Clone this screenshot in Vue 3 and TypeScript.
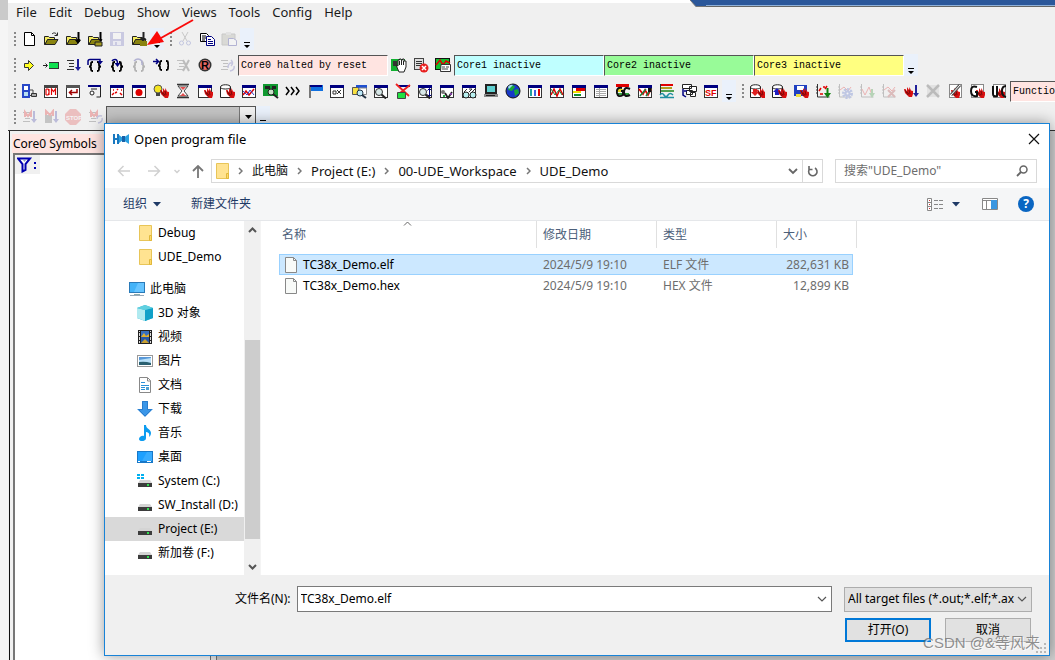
<script setup lang="ts">
import { ref } from 'vue'

type Shape = string

const R = (x: number, y: number, w: number, h: number, fill: string): Shape =>
  `<rect x="${x}" y="${y}" width="${w}" height="${h}" fill="${fill}" shape-rendering="crispEdges"/>`
const L = (d: string, stroke: string, width = 1): Shape =>
  `<path d="${d}" fill="none" stroke="${stroke}" stroke-width="${width}"/>`
const P = (d: string, fill: string, stroke = 'none'): Shape =>
  `<path d="${d}" fill="${fill}" stroke="${stroke}"/>`
const C = (x: number, y: number, r: number, fill: string, stroke = 'none'): Shape =>
  `<circle cx="${x}" cy="${y}" r="${r}" fill="${fill}" stroke="${stroke}"/>`
const T = (x: number, y: number, size: number, fill: string, text: string): Shape =>
  `<text x="${x}" y="${y}" font-size="${size}" font-weight="700" font-family="Liberation Sans, sans-serif" fill="${fill}">${text}</text>`

const NAVY = '#000080'
const RED = '#e00000'
const frame = (inner: Shape = '', bar = NAVY): Shape =>
  R(1, 2, 14, 13, '#333') + R(2, 4, 12, 10, '#fff') + R(1, 2, 14, 3, bar) + inner
const folder = P('M1.500 5.500h4l1 1h5v2H5l-3 5h-.5z', '#f4ec60', '#222') + P('M4.500 8.500h10.500l-3 5H2z', '#8a8410', '#222')
const hand = P('M7 7l1.500 0 1.500 2.500V5l2 3 .5-3 1.500 3.500 2 .5v3l-1 3h-3l-4-4z', '#d81010') + L('M10 9.500l2 3M12 8l1 4M8 8l3 5', '#7a0808')
const braces = L('M6 5H5.500Q4 5 4 6.500V8q0 1.500-2 1.500 2 0 2 1.500v1.500Q4 14 5.500 14H6M10 5h.5q1.500 0 1.500 1.500V8q0 1.500 2 1.500-2 0-2 1.500v1.500q0 1.500-1.500 1.500H10', '#000', 1.8)
const listArrow = R(2, 3, 7, 1, '#333') + R(4, 6, 5, 1, '#333') + R(4, 9, 5, 1, '#333') + R(2, 12, 7, 1, '#333')
const downArrow = R(12, 2, 2, 10, '#20209a') + P('M10 10h6l-3 4z', '#20209a')
const lens = C(6, 9, 3.5, '#d8e8e8', '#333') + L('M8.500 11.500L13 15.500', '#222', 2)
const can = P('M1.500 4c0-3 10-3 10 0v10.500h-10z', '#fff', '#222') + L('M1.500 4.500c1 2 9 2 10 0', '#222')
const axes = L('M2.500 1v13h12M1 4h2M1 7h2M1 10h2', '#333')
const page = R(2, 1, 13, 14, '#888') + R(3, 2, 11, 12, '#fff')

const icons: Record<string, Shape> = {
  'New': P('M3.500 1.500h7l3 3v10h-10z', '#fff', '#000') + L('M10.500 1.500v3h3', '#000'),
  'Open': folder + L('M9 3c2-2 4-1 5 1M14.500 1.500v3h-3', '#222'),
  'Load program': folder + L('M13.500 1v10', '#000', 2) + P('M10 9h6l-3 4z', '#000'),
  'Load more': folder + L('M13.500 1v9', '#000', 2) + P('M8 11h7v4H8z', '#a49a20', '#222'),
  'Save': R(1, 1, 14, 14, '#5a5ab8') + R(4, 2, 8, 6, '#fff') + R(4, 10, 8, 4, '#d8d8f4') + R(6, 11, 2, 3, '#5a5ab8'),
  'Load target file': folder + L('M12.500 1v8', '#222', 2) + P('M9 7h6l-3 4z', '#222') + R(9, 10, 7, 5, '#8a8410'),
  'Cut': L('M5 1l5 9M11 1L6 10', '#555') + C(4.5, 12, 2, 'none', '#3b4bb0') + C(11.5, 12, 2, 'none', '#3b4bb0'),
  'Copy': P('M1.500 2.500h6l2 2v6h-8z', '#fff', '#000') + L('M3 5h4M3 7h5M3 9h3', '#000') + P('M7.500 5.500h5l3 3v6h-8z', '#fff', NAVY) + L('M9 8.500h3M9 10.500h5M9 12.500h5', NAVY),
  'Paste': P('M1 3h13v11H1z', '#998', '#555') + R(5, 1, 5, 3, '#bbb') + P('M7.500 7.500h5l3 2v5h-8z', '#fff', NAVY),

  'Run to': P('M3.500 6.500h4v-3l5 5-5 5v-3h-4z', '#ffff20', '#333'),
  'Set location': R(6, 5, 10, 7, '#333') + R(6, 6, 9, 5, '#10e050') + L('M0 8.500h4M2.500 6.500l2 2-2 2', '#222'),
  'Step source': listArrow + downArrow,
  'Step over': braces + L('M1 8V4.500Q1 2.500 3 2.500h10v2', NAVY, 1.5) + P('M10.500 4h5.500l-2.700 3.500z', NAVY),
  'Step into': braces + L('M3 4Q4 2.500 6 2.500q2.500 0 2.500 4', NAVY, 1.5) + P('M5.500 6h6L8.500 10z', NAVY),
  'Step return': braces + L('M3 4q4-4 8 0v4', NAVY, 1.5),
  'Run until': `<g transform="translate(3 -1)">${braces}</g>` + L('M0 4.500h5M3 2l2.500 2.500L3 7', NAVY, 1.5),
  'Break': listArrow + L('M8 3l6 11M14 3L8 14', '#222', 2),
  'Reset': C(8, 8, 6.5, '#333') + C(8, 8, 5, '#e86868') + T(4, 12, 11, '#000', 'R'),
  'Restart': listArrow + L('M12 3q3 3 0 6M9 11q0-6 5-5M11 14q5-1 4-5', '#4a4ab0', 1.5),
  'Core halt': R(0, 2, 14, 12, '#10b030') + R(2, 4, 4, 5, '#333') + P('M5 8l2 1V3h1.500V2H10v1h1.500V2H13v2h2v6l-2 5H8z', '#fff', '#222') + L('M8.500 4v4M10.500 3v5M12.500 4v4', '#222'),
  'Core error': R(1, 1, 10, 12, '#444') + R(2, 2, 8, 10, '#ddd') + L('M3 4.500h6M3 6.500h6M3 8.500h6', '#333') + C(11, 11, 4.5, '#e82020') + L('M9 9l4 4M13 9l-4 4', '#fff', 1.5),
  'Core chart': R(0, 1, 15, 12, '#111') + R(1, 2, 13, 10, '#10c030') + L('M1 8l4-5 3 5 3-4 4 2', RED, 1.5) + P('M6 7.500h9.500v7H5.500z', '#fff', '#333') + L('M7 10h3M11 10h3M7 12h6', '#444'),

  'Target info': R(1, 1, 8, 14, '#2848c8') + R(3, 3, 4, 4, '#fff') + R(3, 9, 4, 4, '#b8e0f0') + L('M9 7h3v3M9 12.500h2', '#444') + P('M10.500 10.500h5v3h-5z', '#aaa', '#333'),
  'Memory dump': frame(L('M3 6v6M6 6v6M3 6h2l1 2v2l-1 2H3M8.500 12V6l2 2.500 2-2.500v6', RED, 1.2), '#444'),
  'Return view': frame(L('M12 6v3.500H4M7 7L4.500 9.500 7 12', '#a00000', 1.5), '#555'),
  'Call tree': R(1, 2, 13, 2, NAVY) + L('M4 6h6M13.500 4v10h-4', '#222') + C(5, 10, 2, '#fff', '#222'),
  'Scatter': frame(L('M3 12l2-2M6 10l2-1M8 7l1-1M11 10l2 2M4 7h1M12 7h1', RED, 1.5)),
  'Breakpoints': frame(C(8, 9.5, 3.5, RED)),
  'Trigger': C(5, 6, 4, '#f4e420', '#555') + R(3, 10, 4, 3, '#444') + hand,
  'Timing': L('M2 1.500h12M2 14.500h12', '#333', 1.5) + P('M3 3h10L9 8l4 5H3l4-5z', '#fff', '#444') + P('M5 4h6L8 7zM8 10l3 3H5z', '#e05050'),
  'Hand view': frame(hand),
  'Hand memory': can + hand,
  'Graph': frame(L('M2 12l3-4 3 4 5-6', RED, 1.5) + L('M2 8l4 4 3-5 4 5', '#3040d0')),
  'Inspect chip': R(0, 1, 15, 12, '#109830') + R(2, 3, 5, 3, '#222') + R(9, 3, 4, 3, '#222') + C(8, 9, 3, '#c8e0c8', '#222') + L('M10 11l5 4', '#222', 2),
  'Forward': L('M1 4l3 4-3 4M6 4l3 4-3 4M11 4l3 4-3 4', '#000', 1.5),
  'Flag': R(2, 2, 2, 13, '#777') + R(4, 2, 12, 6, '#1070e0') + R(3, 2, 12, 2, NAVY),
  'Hex': frame(L('M4 8h3v3H4zM8 7l4 4M12 7l-4 4', '#333')),
  'Find folder': R(5, 2, 11, 3, '#2050d0') + P('M1.500 4.500h5l1 1v6h-6z', '#f8e040', '#555') + P('M8 5h7.500v6.500H8z', '#fff', '#888') + C(9, 10, 3, '#bce8f8', '#234') + L('M11 12l4 3', '#234', 2),
  'Find': frame() + lens,
  'Disconnect': R(3, 2, 12, 2, NAVY) + L('M1 1l13 12M15 2L5 10', '#f02020', 1.8) + P('M2.500 9.500h8v6h-8z', '#20e040', '#444'),
  'Find symbol': frame(L('M12.500 5.500v8M10.500 7.500l2-2 2 2M10.500 11.500l2 2 2-2', NAVY)) + lens,
  'Variables': frame(C(4, 9, 2, '#777') + L('M6 10l3 5 4-6', '#222', 1.8) + R(4, 12, 2, 2, '#20b040') + R(11, 10, 2, 2, '#8040a0')),
  'Watch': frame(L('M3 9l3-3M8 6h3l-3 3M11 9l3-3', '#333')) + C(5, 12, 3, '#b8f0f0', '#222') + C(12, 12, 3, '#b8f0f0', '#222'),
  'Console': R(2, 1, 12, 10, '#222') + R(4, 3, 8, 6, '#60d0d0') + R(1, 11, 14, 3, '#888') + R(3, 12, 9, 1, '#222'),
  'Web': C(8, 8, 7, '#1838c8', '#111') + P('M4 3q5-2 6 1l-3 4-4-1zM9 7l4-1 1 4-4 3z', '#18a838') + P('M3 4q2-3 5-2l-4 4z', '#a0e0f0'),
  'Bars': frame(R(3, 6, 2, 7, '#20a0a0') + R(7, 7, 2, 6, '#4060e0') + R(11, 6, 2, 7, RED)),
  'Curve': frame(L('M2 12l3-6 3 7 3-7 3 6', RED, 1.5) + L('M2 6l4 6 4-5 3 5', '#208040')),
  'Gantt': frame(R(5, 5, 9, 3, RED) + R(2, 8, 8, 2, '#f0e000') + R(3, 11, 7, 2, '#109030')),
  'Table': frame(L('M3 6.500h10M3 8.500h10M3 10.500h10M3 12.500h10M6.500 5v9', '#aaa')),
  'Coverage': R(1, 1, 13, 3, RED) + R(3, 6, 5, 3, '#e8d820') + R(3, 10, 11, 2, '#30a040') + L('M7 5Q1 4 2 10q1 5 6 2V8H6M15 6q-6-3-6 3 0 6 6 3', '#111', 2),
  'Heat map': frame(L('M2 6l4 5 2-4 3 5 3-6', RED, 1.8) + L('M3 13l6-7M9 13l5-7', '#208040', 1.5) + R(11, 5, 3, 4, '#111')),
  'Profile': R(1, 1, 13, 2, RED) + R(2, 4, 11, 2, '#b0a020') + R(2, 7, 13, 2, '#50a050') + L('M1.500 1v10', '#333') + L('M1 12q2-3 4 0t4 0 5 0M1 14.500h14', '#2090a0', 1.5),
  'Blocks': P('M1.500 1.500h9v4h-9zM8.500 3.500h7v5h-7zM5.500 7.500h6v4h-6zM9.500 9.500h5v4h-5z', '#fff', '#222') + L('M2 6v6l3 2M3 8h3', NAVY, 1.5),
  'SF registers': frame(T(2, 13, 9, RED, 'SF')),

  'Load flash': can + P('M4 6h4v3h2l-4 4-4-4h2z', '#e02020') + `<g transform="translate(1 0)">${hand}</g>`,
  'Read flash': can + P('M4 12h4V9h2L6 5 2 9h2z', '#2020c0') + hand,
  'Save flash': R(1, 2, 13, 11, '#2040c0') + R(4, 3, 7, 4, '#fff') + R(3, 11, 5, 3, '#f0e040') + hand,
  'Plot load': axes + L('M4 8l2-3M8 4h2M5 11h3M10 6l2-3', RED, 1.5) + L('M12.500 5v7', '#108010', 2) + P('M9 10h7l-3.500 5z', '#108010'),
  'Plot settings': axes + L('M3 7l4-3 4 4 3-4', RED) + `<circle cx="10.500" cy="10.500" r="4" fill="none" stroke="#3050c0" stroke-width="3" stroke-dasharray="2 1"/>` + C(10.5, 10.5, 3, '#3050c0') + C(10.5, 10.5, 1, '#fff'),
  'Plot graph': axes + L('M3 6l3 6 4-8 3 8', RED) + L('M13 6v6', '#108010', 2) + P('M10 10h6l-3 5z', '#108010'),
  'Plot clear': axes + L('M3 7l4-3 4 4 3-4', RED) + L('M7 7l7 7M14 7l-7 7', '#a02020', 2),
  'Hand step': `<g transform="translate(-6 -1)">${hand}</g>` + downArrow,
  'Remove hand': R(2, 2, 12, 12, '#bbb') + L('M2 2l12 12M14 2L2 14', '#222', 2.5),
  'Edit hand': page + `<g transform="translate(-3 0)">${hand}</g>` + L('M4 12l9-10', '#555', 3) + L('M4 12l9-10', '#fff'),
  'Hand circle': page + hand + L('M8 4Q2 2 2 8t6 5V9H6', '#111', 2),
  'Hand pair': page + `<g transform="translate(-2 0)">${hand}</g>` + L('M2 3v8q0 3 4 2V3M15 3q-4 0-4 5t4 6', '#111', 2),

  'Multi step': listArrow + L('M4 8V3l3 4 3-4v5', RED, 2) + downArrow,
  'Multi lock': R(2, 6, 7, 8, '#444') + L('M3 6V2l4 4 3-4v5', RED, 2) + downArrow,
  'Stop all': P('M5 0h6l5 5v6l-5 5H5l-5-5V5z', '#e03030') + T(1, 11, 6, '#fff', 'STOP'),
  'Multi restart': listArrow + L('M4 8V3l3 4 3-4v5', RED, 2) + L('M10 10q0-4 5-3M11 14q5-1 4-5', '#4a4ab0', 1.5),
}

const off = new Set([
  'Save', 'Cut', 'Paste', 'Step return', 'Break', 'Restart', 'Plot settings', 'Plot graph', 'Plot clear',
  'Remove hand', 'Multi step', 'Multi lock', 'Stop all', 'Multi restart',
])

const fileTools = ['New', 'Open', 'Load program', 'Load more', 'Save', 'Load target file']
const editTools = ['Cut', 'Copy', 'Paste']
const runTools = ['Run to', 'Set location', 'Step source', 'Step over', 'Step into', 'Step return', 'Run until', 'Break', 'Reset', 'Restart']
const coreTools = ['Core halt', 'Core error', 'Core chart']
const viewTools = [
  'Target info', 'Memory dump', 'Return view', 'Call tree', 'Scatter', 'Breakpoints', 'Trigger', 'Timing', 'Hand view',
  'Hand memory', 'Graph', 'Inspect chip', 'Forward', 'Flag', 'Hex', 'Find folder', 'Find', 'Disconnect', 'Find symbol',
  'Variables', 'Watch', 'Console', 'Web', 'Bars', 'Curve', 'Gantt', 'Table', 'Coverage', 'Heat map', 'Profile', 'Blocks',
  'SF registers',
]
const traceTools = [
  'Load flash', 'Read flash', 'Save flash', 'Plot load', 'Plot settings', 'Plot graph', 'Plot clear', 'Hand step',
  'Remove hand', 'Edit hand', 'Hand circle', 'Hand pair',
]
const multiTools = ['Multi step', 'Multi lock', 'Stop all', 'Multi restart']

type Part =
  | { kind: 'tools'; items: string[] }
  | { kind: 'grip' }
  | { kind: 'more' }
  | { kind: 'field'; text: string; tone: string }
  | { kind: 'select' }

const bars: Part[][] = [
  [{ kind: 'grip' }, { kind: 'tools', items: fileTools }, { kind: 'more' }, { kind: 'grip' }, { kind: 'tools', items: editTools }, { kind: 'more' }],
  [
    { kind: 'grip' }, { kind: 'tools', items: runTools },
    { kind: 'field', text: 'Core0 halted by reset', tone: 'pink' },
    { kind: 'tools', items: coreTools },
    { kind: 'field', text: 'Core1 inactive', tone: 'cyan' },
    { kind: 'field', text: 'Core2 inactive', tone: 'green' },
    { kind: 'field', text: 'Core3 inactive', tone: 'yellow' },
    { kind: 'more' },
  ],
  [
    { kind: 'grip' }, { kind: 'tools', items: viewTools }, { kind: 'more' },
    { kind: 'grip' }, { kind: 'tools', items: traceTools },
    { kind: 'field', text: 'Function', tone: 'pink' },
  ],
  [{ kind: 'grip' }, { kind: 'tools', items: multiTools }, { kind: 'select' }, { kind: 'more' }],
]

const menus = ['File', 'Edit', 'Debug', 'Show', 'Views', 'Tools', 'Config', 'Help']

const drive = P('M3 7h10l2 3H1z', '#d4d4d4') + R(1, 10, 14, 4, '#3c3c3c') + R(10, 11, 2, 2, '#30e050')
const places: Record<string, Shape> = {
  folder: P('M2.500 .5h12v15h-12z', '#ffe391', '#e8c558') + P('M12.500 10.500h2v5h-2z', '#ffd968', '#e0b83c'),
  pc: R(0, 1, 16, 11, '#2a7ab8') + R(1, 2, 14, 9, '#43b3f8') + P('M9 2h6v9H5z', '#66c4ff') + R(5, 13, 6, 1, '#8aa') + R(1, 14, 14, 1, '#9ab'),
  cube: P('M0 3l8-3 8 3v10l-8 3-8-3z', '#28b4d0') + P('M0 3l8 2v11l-8-3z', '#b0eaf0') + P('M8 5l8-2v10l-8 3z', '#10a0c8') + P('M0 3l8-3 8 3-8 2z', '#60d0e0'),
  video: R(1, 1, 14, 14, '#222') + R(4, 2, 8, 6, '#3870c0') + R(4, 8, 8, 6, '#2858a8') + P('M4 8l3-4 2 3 3-2v3z', '#e0b030') + P('M4 14l4-4 4 4z', '#c8a030') + L('M2.500 2v12M13.500 2v12', '#ddd') + L('M2 3.500h1M2 7.500h1M2 11.500h1M13 3.500h1M13 7.500h1M13 11.500h1', '#222'),
  picture: R(0, 2, 16, 12, '#999') + R(1, 3, 14, 10, '#fff') + R(2, 4, 12, 8, '#b8e0f8') + P('M2 9q6-1 12 1v2H2z', '#2a6070') + P('M2 4h12v1L2 7z', '#5898d8'),
  document: P('M2.500 .5h8l3 3v12h-11z', '#fff', '#888') + L('M4 5.500h4M4 8.500h8M4 10.500h4M4 12.500h4', '#2890d8') + L('M10.500 1v3h3', '#888') + R(9, 10, 3, 3, '#50a0d0'),
  download: P('M5 0h6v8h5l-8 8-8-8h5z', '#3a96e8') + L('M5.500 .5h5v8h4L8 15 1.500 8.500h4z', '#2a7ccc'),
  music: P('M7 0h2c0 4 5 4 5 8 0 2-1 3-2 4 1-4-1-5-3-5v6c0 4-7 4-7 1 0-2 3-4 5-3z', '#0c9cf0'),
  desktop: R(0, 2, 16, 12, '#1878c8') + R(1, 3, 14, 9, '#1ea0ff') + P('M10 3h5v9H5z', '#38acff') + R(1, 12, 2, 1, '#fff') + R(10, 12, 4, 1, '#fff'),
  system: R(0, 1, 3, 2, '#00b0f0') + R(4, 1, 3, 2, '#00b0f0') + R(0, 4, 3, 2, '#00b0f0') + R(4, 4, 3, 2, '#00b0f0') + drive,
  drive,
}

interface Place { name: string; icon: string; level: number; gap?: boolean; current?: boolean }
const tree: Place[] = [
  { name: 'Debug', icon: 'folder', level: 2 },
  { name: 'UDE_Demo', icon: 'folder', level: 2 },
  { name: '此电脑', icon: 'pc', level: 1, gap: true },
  { name: '3D 对象', icon: 'cube', level: 2 },
  { name: '视频', icon: 'video', level: 2 },
  { name: '图片', icon: 'picture', level: 2 },
  { name: '文档', icon: 'document', level: 2 },
  { name: '下载', icon: 'download', level: 2 },
  { name: '音乐', icon: 'music', level: 2 },
  { name: '桌面', icon: 'desktop', level: 2 },
  { name: 'System (C:)', icon: 'system', level: 2 },
  { name: 'SW_Install (D:)', icon: 'drive', level: 2 },
  { name: 'Project (E:)', icon: 'drive', level: 2, current: true },
  { name: '新加卷 (F:)', icon: 'drive', level: 2 },
]

const crumbs = ['此电脑', 'Project (E:)', '00-UDE_Workspace', 'UDE_Demo']
const isHan = (text: string): boolean => /^[\u4e00-\u9fff]/.test(text)

const files = [
  { name: 'TC38x_Demo.elf', date: '2024/5/9 19:10', type: 'ELF 文件', size: '282,631 KB' },
  { name: 'TC38x_Demo.hex', date: '2024/5/9 19:10', type: 'HEX 文件', size: '12,899 KB' },
]
const fileName = ref('TC38x_Demo.elf')
const search = ref('')
</script>

<template>
  <div class="app">
    <div class="edge"></div>
    <div class="banner">
      <svg width="16" height="7" viewBox="0 0 16 7"><path d="M0 0h16v7H6z" fill="#2b579a" /><path d="M0 0l6 6.500h10" fill="none" stroke="#777" /></svg>
      <div class="banner-fill"></div>
    </div>

    <div class="main">
      <nav class="menu">
        <button v-for="m in menus" :key="m" type="button">{{ m }}</button>
      </nav>

      <div v-for="(bar, i) in bars" :key="i" class="bar">
        <template v-for="(part, j) in bar" :key="j">
          <span v-if="part.kind === 'grip'" class="grip"></span>
          <div v-else-if="part.kind === 'tools'" class="tools">
            <button
              v-for="name in part.items" :key="name" type="button" class="tool" :class="{ off: off.has(name) }"
              :aria-label="name" :disabled="off.has(name)"
            >
              <svg width="16" height="16" viewBox="0 0 16 16" v-html="icons[name]"></svg>
            </button>
          </div>
          <button v-else-if="part.kind === 'more'" type="button" class="more" aria-label="Toolbar options">
            <svg width="6" height="7" viewBox="0 0 6 7"><path d="M0 0h6v1H0zM0 3h6L3 6z" /></svg>
          </button>
          <div v-else-if="part.kind === 'field'" class="field" :class="part.tone">{{ part.text }}</div>
          <div v-else class="combo">
            <select aria-label="Core group"><option></option></select>
            <svg width="7" height="4" viewBox="0 0 7 4"><path d="M0 0h7L3.500 4z" /></svg>
          </div>
        </template>
      </div>

      <div class="workspace">
        <section class="symbols">
          <h2>Core0 Symbols</h2>
          <div class="symbol-tree">
            <button type="button" class="filter" aria-label="Filter">
              <svg width="20" height="16" viewBox="0 0 20 16">
                <path d="M1 1.500h12L8.500 7v6l-3 1.500V7z" fill="#fff" stroke="#0000b0" stroke-width="2" />
                <path d="M6 3h3L7.500 5z" fill="#9ab" /><path d="M17 5h2v2h-2zM17 10h2v2h-2z" fill="#0000b0" />
              </svg>
            </button>
          </div>
        </section>
        <div class="desk"></div>
      </div>
    </div>

    <svg class="pointer" width="52" height="32" viewBox="0 0 52 32">
      <path d="M48 2L16 20" stroke="#fa0a0a" stroke-width="2" /><path d="M2 27L12 13l7 11z" fill="#fa0a0a" />
    </svg>

    <div class="dialog" role="dialog" aria-labelledby="dialog-title">
      <header class="title">
        <svg width="16" height="12" viewBox="0 0 16 12">
          <path d="M0 1h2v4h2V1h2v10H4V7H2v4H0z" fill="#1878c0" /><path d="M6 2l4 3 6-4v10l-6-4-4 3z" fill="#2aa0e0" /><path d="M9 3h3v6H9z" fill="#1860a8" />
        </svg>
        <h1 id="dialog-title">Open program file</h1>
        <button type="button" class="close" aria-label="Close">
          <svg width="12" height="12" viewBox="0 0 12 12"><path d="M1 1l10 10M11 1L1 11" stroke="#111" stroke-width="1.200" /></svg>
        </button>
      </header>

      <div class="nav">
        <div class="history">
          <button type="button" aria-label="Back"><svg width="14" height="12" viewBox="0 0 14 12"><path d="M6.500 1L1.500 6l5 5M1.500 6H13" fill="none" stroke="#d0d0d0" stroke-width="1.500" /></svg></button>
          <button type="button" aria-label="Forward"><svg width="14" height="12" viewBox="0 0 14 12"><path d="M7.500 1l5 5-5 5M12.500 6H1" fill="none" stroke="#d0d0d0" stroke-width="1.500" /></svg></button>
          <button type="button" class="slim" aria-label="Recent"><svg width="6" height="5" viewBox="0 0 6 5"><path d="M.5 1L3 3.500 5.500 1" fill="none" stroke="#d0d0d0" stroke-width="1.500" /></svg></button>
          <button type="button" class="up" aria-label="Up"><svg width="12" height="13" viewBox="0 0 12 13"><path d="M1 6l5-5 5 5M6 1v12" fill="none" stroke="#777" stroke-width="1.800" /></svg></button>
        </div>
        <div class="address">
          <svg class="address-icon" width="16" height="16" viewBox="0 0 16 16" v-html="places.folder"></svg>
          <template v-for="c in crumbs" :key="c">
            <svg class="sep" width="5" height="8" viewBox="0 0 5 8"><path d="M1 1l3 3-3 3" fill="none" stroke="#777" stroke-width="1.500" /></svg>
            <a href="#" :class="{ han: isHan(c) }">{{ c }}</a>
          </template>
          <button type="button" class="history-drop" aria-label="Previous locations"><svg width="10" height="7" viewBox="0 0 10 7"><path d="M1 1l4 4 4-4" fill="none" stroke="#666" stroke-width="1.800" /></svg></button>
          <button type="button" class="refresh" aria-label="Refresh"><svg width="12" height="12" viewBox="0 0 12 12"><path d="M3 3.500a4.200 4.200 0 1 0 5-.5M2 1v3.500h3.500" fill="none" stroke="#666" stroke-width="1.600" /></svg></button>
        </div>
        <div class="search">
          <input v-model="search" type="text" placeholder="搜索&quot;UDE_Demo&quot;" aria-label="搜索" />
          <svg width="12" height="12" viewBox="0 0 12 12"><circle cx="7.500" cy="4.500" r="3.500" fill="none" stroke="#666" stroke-width="1.500" /><path d="M5 7l-4 4" stroke="#666" stroke-width="1.800" /></svg>
        </div>
      </div>

      <div class="commands">
        <button type="button">组织 <svg width="8" height="5" viewBox="0 0 8 5"><path d="M0 0h8L4 4.500z" fill="#1e3a66" /></svg></button>
        <button type="button" class="new-folder">新建文件夹</button>
        <button type="button" class="view" aria-label="View">
          <svg width="17" height="13" viewBox="0 0 17 13"><path d="M.5.500h4v12h-4zM.5 4.500h4M.5 8.500h4" fill="#fff" stroke="#888" /><path d="M2 2h1v1H2zM2 6h1v1H2zM2 10h1v1H2z" fill="#c33" /><path d="M7 2.500h4M12 2.500h4M7 6.500h4M12 6.500h4M7 10.500h4M12 10.500h4" stroke="#888" /></svg>
          <svg width="8" height="5" viewBox="0 0 8 5"><path d="M0 0h8L4 4.500z" fill="#1e3a66" /></svg>
        </button>
        <button type="button" class="pane" aria-label="Preview pane"><svg width="16" height="12" viewBox="0 0 16 12"><path d="M.5.500h15v11H.5zM.5 2.500h15M4.500 2v9" fill="#fff" stroke="#888" /><path d="M9 2h6v9H9z" fill="#3a96e0" /></svg></button>
        <button type="button" class="help" aria-label="Help">?</button>
      </div>

      <div class="body">
        <ul class="places">
          <li v-for="p in tree" :key="p.name + p.icon" :class="{ gap: p.gap, current: p.current, root: p.level === 1 }">
            <svg width="16" height="16" viewBox="0 0 16 16" v-html="places[p.icon]"></svg>
            <span>{{ p.name }}</span>
          </li>
        </ul>
        <div class="scroll">
          <svg width="9" height="6" viewBox="0 0 9 6"><path d="M1 5l3.500-3.500L8 5" fill="none" stroke="#555" stroke-width="2" /></svg>
          <div class="track"><div class="thumb"></div></div>
          <svg width="9" height="6" viewBox="0 0 9 6"><path d="M1 1l3.500 3.500L8 1" fill="none" stroke="#555" stroke-width="2" /></svg>
        </div>
        <div class="list">
          <table>
            <colgroup><col class="c-name" /><col class="c-date" /><col class="c-type" /><col class="c-size" /></colgroup>
            <thead>
              <tr>
                <th>名称<svg class="sorted" width="9" height="5" viewBox="0 0 9 5"><path d="M1 4.500L4.500 1 8 4.500" fill="none" stroke="#666" /></svg></th>
                <th>修改日期</th><th>类型</th><th>大小</th>
              </tr>
            </thead>
            <tbody>
              <tr v-for="f in files" :key="f.name" :class="{ selected: f.name === fileName }">
                <td>
                  <div class="file">
                    <svg width="14" height="16" viewBox="0 0 14 16"><path d="M1.500.5h8l3 3v12h-11z" fill="#f8faf8" stroke="#888" /><path d="M9.500.5v3h3" fill="none" stroke="#888" /></svg>
                    {{ f.name }}
                  </div>
                </td>
                <td>{{ f.date }}</td><td>{{ f.type }}</td><td>{{ f.size }}</td>
              </tr>
            </tbody>
          </table>
        </div>
      </div>

      <footer class="foot">
        <div class="foot-row">
          <label for="file-name">文件名(N):</label>
          <div class="name-box">
            <input id="file-name" v-model="fileName" type="text" />
            <svg width="10" height="6" viewBox="0 0 10 6"><path d="M1 1l4 4 4-4" fill="none" stroke="#555" stroke-width="1.200" /></svg>
          </div>
          <div class="type-box">
            <select aria-label="File type"><option>All target files (*.out;*.elf;*.ax</option></select>
            <svg width="10" height="6" viewBox="0 0 10 6"><path d="M1 1l4 4 4-4" fill="none" stroke="#555" stroke-width="1.200" /></svg>
          </div>
        </div>
        <div class="foot-row actions">
          <button type="button" class="primary">打开(O)</button>
          <button type="button">取消</button>
        </div>
      </footer>
      <svg class="resize" width="11" height="11" viewBox="0 0 11 11"><path d="M8 0h2v2H8zM4 4h2v2H4zM8 4h2v2H8zM0 8h2v2H0zM4 8h2v2H4zM8 8h2v2H8z" fill="#b8b8b8" /></svg>
    </div>

    <div class="credit">CSDN @&amp;等风来</div>
  </div>
</template>

<style>
body {
  margin: 0;
  overflow: hidden;
}
</style>

<style scoped>
.app {
  position: relative;
  display: flex;
  height: 100vh;
  overflow: hidden;
  background: #f0f0f0;
  color: #000;
  font: 12px/16px "Noto Sans", "Noto Sans CJK SC", sans-serif;
}
.app *, .app *::after { box-sizing: border-box; }
button, input, select {
  margin: 0;
  padding: 0;
  border: 0;
  background: none;
  color: inherit;
  font: inherit;
}
svg { display: block; flex: none; }

.edge {
  flex: none;
  width: 8px;
  background: linear-gradient(#cacaca 20px, #f5f5f5 20px);
}
.banner {
  position: absolute;
  top: 0;
  left: 690px;
  right: 0;
  display: flex;
  height: 7px;
}
.banner-fill {
  flex: 1;
  background: #2b579a;
  border-bottom: 1px solid #666;
  box-shadow: inset 0 -1px #8fb0d8;
}
.main {
  flex: 1;
  display: flex;
  flex-direction: column;
  min-width: 0;
}

.menu {
  display: flex;
  height: 26px;
  padding: 0 2px 2px;
  border-top: 3px solid #fff;
  font-size: 13px;
}
.menu button { padding: 0 6px 4px; color: #1b1b1b; }

.bar {
  display: flex;
  align-items: center;
  height: 26px;
  overflow: hidden;
}
.grip {
  flex: none;
  width: 10px;
  height: 14px;
  background: repeating-linear-gradient(#888 0 2px, transparent 2px 4px) 6px 0 / 2px 14px no-repeat;
}
.tools { display: flex; flex: none; }
.tool {
  display: flex;
  justify-content: center;
  align-items: center;
  width: 22px;
  height: 22px;
}
.tool.off { opacity: 0.25; }
.more {
  display: flex;
  flex: none;
  justify-content: center;
  align-items: flex-end;
  width: 14px;
  height: 22px;
  padding-bottom: 1px;
  background: #eaf1fb;
}
.field {
  flex: none;
  width: 150px;
  height: 21px;
  padding-left: 2px;
  overflow: hidden;
  border: 1px solid #fff;
  border-top: 1px solid #555;
  border-left: 1px solid #555;
  font: 10px/19px "Liberation Mono", monospace;
  white-space: nowrap;
}
.pink { background: #ffe4e1; }
.cyan { background: #bfffff; }
.green { background: #98fb98; }
.yellow { background: #ffff80; }
.combo {
  display: flex;
  flex: none;
  align-self: flex-end;
  width: 150px;
  height: 24px;
  align-items: center;
  position: relative;
}
.combo select {
  appearance: none;
  width: 100%;
  height: 24px;
  border: 1px solid #555;
  border-bottom: 0;
  background: linear-gradient(90deg, #c3c3c3 132px, #777 132px, #777 133px, #f0f0f0 133px);
}
.combo svg { position: absolute; right: 4px; top: 9px; }

.workspace {
  flex: 1;
  display: flex;
  min-height: 0;
  border-top: 1px solid #333;
}
.symbols {
  display: flex;
  flex-direction: column;
  width: 202px;
  margin-left: 1px;
  padding: 3px 0 0 2px;
  border-left: 1px solid #111;
}
.symbols h2 {
  margin: 0;
  padding: 0 1px;
  background: #ffe4e1;
  font-size: 12px;
  font-weight: 400;
  line-height: 19px;
}
.symbol-tree {
  flex: 1;
  margin-left: 1px;
  border: 1px solid #777;
  border-width: 2px 1px 0 2px;
  background: #fff;
}
.filter { padding: 2px 3px 1px 2px; background: #f0f0f0; }
.desk {
  flex: 1;
  margin-left: 5px;
  border-left: 1px solid #777;
  background: #d0d0d0;
}
.pointer { position: absolute; left: 145px; top: 18px; }

.dialog {
  position: absolute;
  top: 123px;
  right: 5px;
  bottom: 4px;
  left: 104px;
  display: flex;
  flex-direction: column;
  border: 1px solid #1883d7;
  background: #fff;
  box-shadow: 0 0 14px rgba(0, 0, 0, 0.4);
}
.title {
  display: flex;
  align-items: center;
  height: 30px;
  padding: 0 9px 0 8px;
}
.title h1 {
  flex: 1;
  margin: 0 0 0 5px;
  font-size: 13px;
  font-weight: 400;
}

.nav {
  display: flex;
  align-items: center;
  height: 34px;
  padding: 0 12px;
}
.history { display: flex; align-items: center; width: 94px; }
.history button { width: 14px; margin-right: 16px; }
.history .slim { width: 6px; margin-right: 12px; margin-left: -3px; }
.history .up { width: 12px; margin: 0; }
.address {
  display: flex;
  flex: 1;
  align-items: center;
  height: 24px;
  border: 1px solid #d9d9d9;
  font-size: 13px;
}
.address-icon { margin: 0 7px 0 2px; }
.address a { color: #111; text-decoration: none; }
.address .han { font-size: 12px; }
.sep { margin: 0 9px; }
.address-icon + .sep { margin-left: 1px; }
.history-drop { margin: 0 4px 0 auto; }
.refresh {
  display: flex;
  justify-content: center;
  align-items: center;
  width: 20px;
  height: 22px;
  border-left: 1px solid #d9d9d9;
}
.search {
  display: flex;
  align-items: center;
  width: 202px;
  height: 24px;
  margin-left: 12px;
  padding: 0 8px;
  border: 1px solid #d9d9d9;
}
.search input { flex: 1; min-width: 0; outline: 0; }
.search input::placeholder { color: #6d6d6d; opacity: 1; }

.commands {
  display: flex;
  align-items: center;
  height: 33px;
  padding: 0 15px 0 18px;
  border-bottom: 1px solid #e5e7ea;
  background: #f5f6f7;
  color: #1e3a66;
}
.commands button { display: flex; align-items: center; gap: 6px; }
.commands .new-folder { margin-left: 30px; }
.commands .view { margin-left: auto; gap: 8px; }
.commands .pane { margin-left: 22px; }
.commands .help {
  justify-content: center;
  width: 16px;
  height: 16px;
  margin-left: 20px;
  border-radius: 50%;
  background: #0a66c2;
  color: #fff;
  font-weight: 700;
}

.body { display: flex; flex: 1; min-height: 0; }
.places {
  width: 139px;
  margin: 0;
  padding: 0;
  overflow: hidden;
  list-style: none;
}
.places li {
  display: flex;
  align-items: center;
  gap: 5px;
  height: 24px;
  padding-left: 32px;
  white-space: nowrap;
}
.places .root { padding-left: 24px; }
.places .gap { margin-top: 8px; }
.places .current { background: #d9d9d9; }
.scroll {
  display: flex;
  flex-direction: column;
  align-items: center;
  width: 17px;
  padding: 6px 0 5px 1px;
  border-right: 1px solid #f4f4f4;
  background: #f0f0f0;
}
.track { flex: 1; width: 15px; padding: 107px 0 25px; }
.thumb { height: 100%; background: #cdcdcd; }
.list { flex: 1; min-width: 0; padding-left: 18px; }

table {
  width: 574px;
  table-layout: fixed;
  border-spacing: 0;
  text-align: left;
}
.c-name { width: 257px; }
.c-date, .c-type { width: 120px; }
.c-size { width: 77px; }
th {
  position: relative;
  height: 33px;
  padding: 0 0 6px 7px;
  color: #4c607a;
  font-weight: 400;
}
th:first-child { padding-left: 3px; }
th::after {
  content: "";
  position: absolute;
  top: 0;
  right: -1px;
  width: 1px;
  height: 27px;
  background: #e0e0e0;
}
th:last-child::after { right: -4px; }
.sorted { position: absolute; top: 0; left: 50%; margin-left: -5px; }
td {
  height: 21px;
  padding: 0 0 0 7px;
  color: #6d6d6d;
}
td:first-child { padding-left: 5px; color: #000; }
td:last-child { padding-right: 4px; text-align: right; }
.selected { background: #cce8ff; outline: 1px solid #99d1ff; outline-offset: -1px; }
.file { display: flex; align-items: center; gap: 5px; }

.foot {
  display: flex;
  flex-direction: column;
  gap: 6px;
  height: 80px;
  padding: 11px 17px 0 130px;
  background: #f0f0f0;
}
.foot-row { display: flex; align-items: center; }
.name-box, .type-box {
  display: flex;
  align-items: center;
  height: 26px;
  padding-right: 4px;
  border: 1px solid #7a7a7a;
  background: #fff;
}
.name-box { flex: 1; margin: 0 12px 0 6px; }
.name-box input { flex: 1; min-width: 0; padding-left: 3px; outline: 0; }
.type-box {
  width: 188px;
  height: 25px;
  padding-left: 3px;
  border-color: #adadad;
  background: #e1e1e1;
}
.type-box select { flex: 1; min-width: 0; appearance: none; outline: 0; }
.actions { justify-content: flex-end; gap: 14px; padding-right: 1px; }
.actions button {
  width: 86px;
  height: 24px;
  border: 1px solid #adadad;
  background: #e1e1e1;
}
.actions .primary { border: 2px solid #0078d7; }
.resize { position: absolute; right: 2px; bottom: 1px; }
.credit {
  position: absolute;
  right: 15px;
  bottom: 6px;
  color: rgba(110, 110, 110, 0.75);
  font: 15px/22px "Liberation Sans", "Noto Sans CJK SC", sans-serif;
  text-shadow: 1px 1px 0 rgba(255, 255, 255, 0.7);
}
</style>
